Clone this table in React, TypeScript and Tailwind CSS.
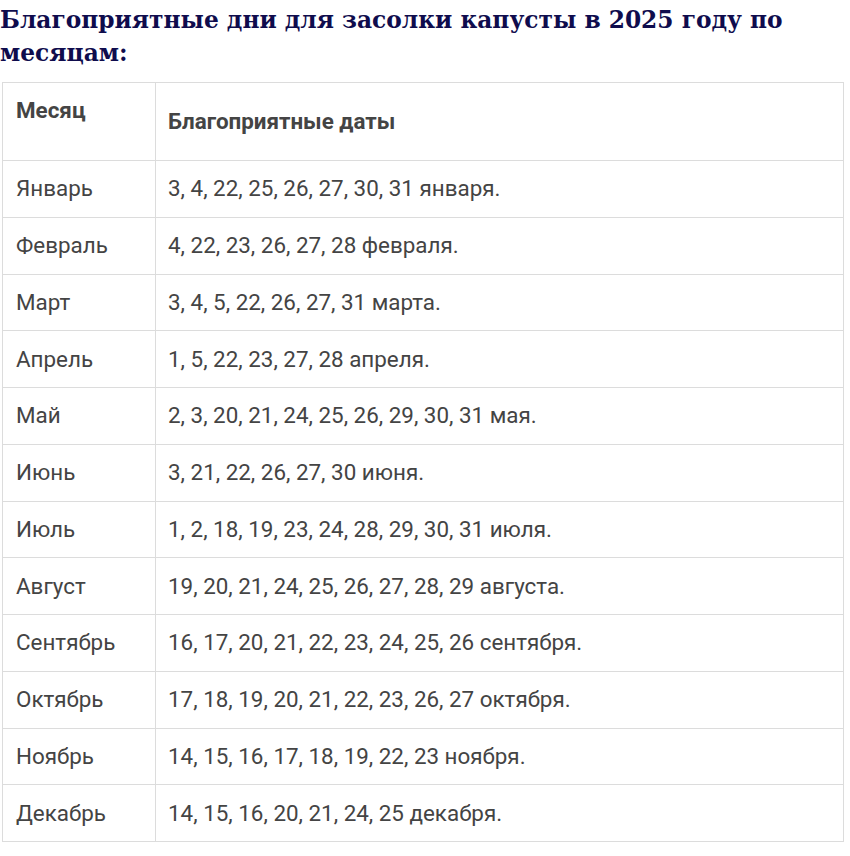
const rows: [string, string][] = [
  ["Январь", "3, 4, 22, 25, 26, 27, 30, 31 января."],
  ["Февраль", "4, 22, 23, 26, 27, 28 февраля."],
  ["Март", "3, 4, 5, 22, 26, 27, 31 марта."],
  ["Апрель", "1, 5, 22, 23, 27, 28 апреля."],
  ["Май", "2, 3, 20, 21, 24, 25, 26, 29, 30, 31 мая."],
  ["Июнь", "3, 21, 22, 26, 27, 30 июня."],
  ["Июль", "1, 2, 18, 19, 23, 24, 28, 29, 30, 31 июля."],
  ["Август", "19, 20, 21, 24, 25, 26, 27, 28, 29 августа."],
  ["Сентябрь", "16, 17, 20, 21, 22, 23, 24, 25, 26 сентября."],
  ["Октябрь", "17, 18, 19, 20, 21, 22, 23, 26, 27 октября."],
  ["Ноябрь", "14, 15, 16, 17, 18, 19, 22, 23 ноября."],
  ["Декабрь", "14, 15, 16, 20, 21, 24, 25 декабря."],
];

export default function App() {
  return (
    <div className="w-[850px] bg-white pt-[3px] pl-[2px] pr-[6px]">
      <h2 className="-ml-[2px] font-['DejaVu_Serif',serif] text-[23.3px] font-bold leading-[33px] text-[#0f0c4d]">
        Благоприятные дни для засолки капусты в 2025 году по месяцам:
      </h2>
      <table className="mt-[13px] w-[842px] border-collapse font-['Roboto',sans-serif] text-[22.4px] leading-[33px] text-[#444444]">
        <thead>
          <tr className="h-[78px]">
            <th className="w-[153px] border border-[#dcdcdc] px-[13px] pt-[11px] align-top text-left font-bold">
              Месяц
            </th>
            <th className="border border-[#dcdcdc] px-[12px] align-middle text-left font-bold">
              Благоприятные даты
            </th>
          </tr>
        </thead>
        <tbody>
          {rows.map(([month, dates]) => (
            <tr key={month} className="h-[56.75px]">
              <td className="border border-[#dcdcdc] px-[13px] align-middle">{month}</td>
              <td className="border border-[#dcdcdc] px-[12px] align-middle">{dates}</td>
            </tr>
          ))}
        </tbody>
      </table>
    </div>
  );
}
